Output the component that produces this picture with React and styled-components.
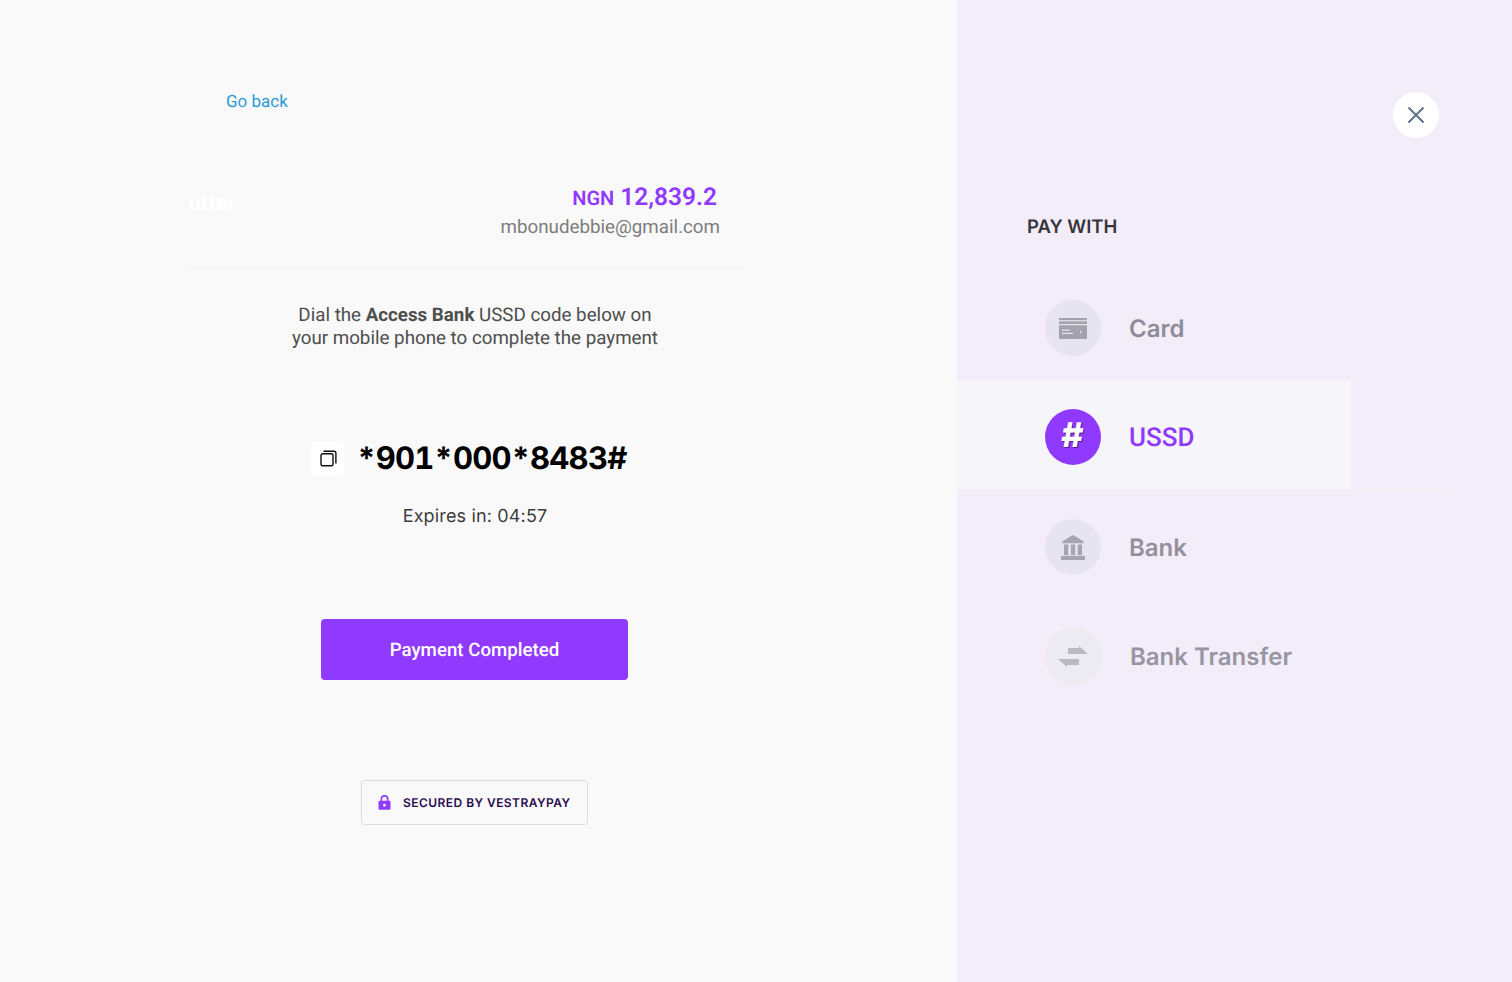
import React from "react";
import styled, { createGlobalStyle } from "styled-components";

const GlobalStyle = createGlobalStyle`
  html, body {
    margin: 0;
    padding: 0;
    height: 100%;
    background: #f9f9f9;
    text-rendering: geometricPrecision;
  }
  * { box-sizing: border-box; }
`;

const Page = styled.div`
  display: flex;
  width: 1512px;
  height: 982px;
  overflow: hidden;
  font-family: Roboto, "Liberation Sans", sans-serif;
`;

const Main = styled.main`
  width: 957px;
  background: #f9f9f9;
  padding: 91px 0 0 188px;
`;

const Column = styled.div`
  width: 556px;
  display: flex;
  flex-direction: column;
`;

const BackLink = styled.a`
  margin-left: 38px;
  font-size: 17px;
  line-height: 22px;
  color: #2a9bd8;
  cursor: pointer;
`;

const Header = styled.div`
  display: flex;
  justify-content: space-between;
  margin-top: 59px;
  height: 97px;
  border-bottom: 1px solid #eeeff1;
`;

const LogoClip = styled.div`
  width: 44px;
  height: 30px;
  margin-top: 17px;
  overflow: hidden;
  color: #fff;
  font-weight: 800;
  font-size: 22px;
  line-height: 30px;
  display: flex;
  justify-content: flex-end;
  span {
    margin-right: -4px;
  }
`;

const Payment = styled.div`
  padding: 8px 24px 0 0;
  text-align: right;
`;

const Amount = styled.div`
  color: #9039ff;
  font-weight: 600;
  font-size: 24.5px;
  line-height: 34px;
  padding-right: 3px;
  small {
    font-size: 20px;
  }
`;

const Email = styled.div`
  color: #7d7d7d;
  font-size: 18.75px;
  line-height: 24px;
`;

const Instructions = styled.p`
  margin: 35px 0 0;
  padding-left: 18px;
  text-align: center;
  color: #4e4e4e;
  font-size: 18.75px;
  line-height: 23px;
  b { font-weight: 700; }
`;

const CodeRow = styled.div`
  display: flex;
  align-items: center;
  justify-content: center;
  gap: 12px;
  margin-top: 87px;
  padding-left: 5px;
`;

const CopyButton = styled.button`
  width: 34px;
  height: 34px;
  border: 0;
  padding: 0 0 0 3px;
  border-radius: 6px;
  background: #fff;
  display: flex;
  align-items: center;
  justify-content: center;
`;

const Code = styled.div`
  font-family: Inter, sans-serif;
  font-feature-settings: "tnum" 1, "calt" 0;
  font-weight: 700;
  font-size: 31px;
  letter-spacing: -0.75px;
  line-height: 42px;
  padding-top: 1px;
  color: #000;
`;

const Expires = styled.div`
  margin-top: 25px;
  padding-left: 18px;
  text-align: center;
  font-family: Inter, sans-serif;
  font-size: 18px;
  letter-spacing: 0.15px;
  line-height: 24px;
  color: #3d3d3d;
`;

const PayButton = styled.button`
  align-self: flex-start;
  width: 307px;
  height: 61px;
  margin: 90px 0 0 133px;
  border: 0;
  border-radius: 4px;
  background: #9039ff;
  color: #fff;
  font-family: Roboto, sans-serif;
  font-weight: 500;
  font-size: 18.7px;
  text-rendering: geometricPrecision;
`;

const SecuredBadge = styled.div`
  align-self: flex-start;
  display: flex;
  align-items: center;
  gap: 12px;
  width: 227px;
  height: 45px;
  margin: 100px 0 0 173px;
  padding-left: 16px;
  border: 1px solid #dcdcdc;
  border-radius: 4px;
  font-family: Inter, sans-serif;
  font-weight: 600;
  font-size: 12px;
  letter-spacing: 0.45px;
  color: #2a0a4f;
`;

const Sidebar = styled.aside`
  position: relative;
  flex: 1;
  background: #f3ecf9;
  padding-top: 214px;
`;

const CloseButton = styled.button`
  position: absolute;
  top: 92px;
  left: 436px;
  width: 46px;
  height: 46px;
  padding: 0;
  border: 0;
  border-radius: 50%;
  background: #fff;
  display: flex;
  align-items: center;
  justify-content: center;
`;

const SideTitle = styled.h2`
  margin: 0 0 31px 70px;
  color: #35353a;
  font-family: Inter, sans-serif;
  font-size: 18.5px;
  line-height: 26px;
  font-weight: 600;
`;

const MethodList = styled.div`
  display: flex;
  flex-direction: column;
`;

const Method = styled.div`
  position: relative;
  display: flex;
  align-items: center;
  gap: 28px;
  width: 394px;
  height: 109.5px;
  padding: ${(p) => (p.$active ? 3 : 5)}px 0 0 88px;
  background: ${(p) => (p.$active ? "#f6f5f9" : "transparent")};
  opacity: ${(p) => p.$fade || 1};

  ${(p) =>
    p.$active &&
    `
    &::after {
      content: "";
      position: absolute;
      left: 0;
      bottom: 0;
      width: 493px;
      height: 1px;
      background: #f5f0f4;
    }
  `}
`;

const MethodIcon = styled.div`
  width: ${(p) => p.$size || 56}px;
  height: ${(p) => p.$size || 56}px;
  flex: none;
  border-radius: 50%;
  background: ${(p) => (p.$active ? "#9039ff" : p.$light ? "#ecebf1" : "#e6e5ef")};
  display: flex;
  align-items: center;
  justify-content: center;
`;

const HashMark = styled.span`
  color: #fff;
  font-family: Inter, sans-serif;
  font-style: italic;
  font-weight: 800;
  font-size: 34px;
  line-height: 1;
  margin: -2px 2px 0 0;
  text-shadow: 1px 1px 0 #4b1f87;
`;

const MethodLabel = styled.span`
  font-family: ${(p) => (p.$active ? "Roboto" : "Inter")}, sans-serif;
  font-weight: ${(p) => (p.$active ? 500 : 600)};
  font-size: ${(p) => (p.$active ? 26 : 24)}px;
  padding-top: ${(p) => (p.$active ? 2 : 0)}px;
  color: ${(p) => (p.$active ? "#9039ff" : "#8e8c98")};
`;

const CopyIcon = () => (
  <svg width="17" height="17" viewBox="0 0 17 17" fill="none" stroke="#111" strokeWidth="1.4">
    <rect x="1" y="3.8" width="12" height="12" rx="1.5" />
    <path d="M3.5 1.2h10.6a1.8 1.8 0 0 1 1.8 1.8v10.4" />
  </svg>
);

const LockIcon = () => (
  <svg width="13" height="15" viewBox="0 0 13 15">
    <path d="M3.3 6V4.100a3.2 3.2 0 0 1 6.4 0V6" fill="none" stroke="#9039ff" strokeWidth="1.6" />
    <rect x="0.5" y="5.800" width="12" height="9" rx="1.4" fill="#9039ff" />
    <circle cx="6.5" cy="10.2" r="1.4" fill="#f9f9f9" />
  </svg>
);

const CloseIcon = () => (
  <svg width="18" height="18" viewBox="0 0 18 18" stroke="#5f7288" strokeWidth="2">
    <path d="M1.5 1.5l15 15M16.5 1.5l-15 15" />
  </svg>
);

const CardIcon = () => (
  <svg width="28" height="21" viewBox="0 0 28 21" fill="#a3a1ad">
    <rect x="0" y="0" width="28" height="2.200" />
    <rect x="0" y="3.400" width="28" height="2.600" />
    <path d="M0 7.200h28v12.800a1 1 0 0 1-1 1H1a1 1 0 0 1-1-1z" />
    <path d="M3 11.500h8v1.300H3zM3 14.700h11v1.300H3z" fill="#e6e5ef" />
    <path d="M21 12l1.800 1.800L21 15.600z" fill="#e6e5ef" />
  </svg>
);

const BankIcon = () => (
  <svg width="24" height="25" viewBox="0 0 24 25" fill="#a3a1ad">
    <path d="M12 0L22.500 6.200v2H1.500v-2z" />
    <path d="M3 9.500h4.300v10.500H3zM9.900 9.500h4.300v10.500H9.900zM16.700 9.500H21v10.500h-4.300z" />
    <rect x="0" y="20.800" width="24" height="4.200" />
  </svg>
);

const TransferIcon = () => (
  <svg width="31" height="21" viewBox="0 0 31 21" fill="#b4b3bb">
    <path d="M10 2H21V0L30 8H10z" />
    <path d="M21 13H0L9 21V19H21z" />
  </svg>
);

export default function App() {
  return (
    <>
      <GlobalStyle />
      <Page>
        <Main>
          <Column>
            <BackLink>Go back</BackLink>
            <Header>
              <LogoClip>
                <span>utter</span>
              </LogoClip>
              <Payment>
                <Amount>
                  <small>NGN</small> 12,839.2
                </Amount>
                <Email>mbonudebbie@gmail.com</Email>
              </Payment>
            </Header>
            <Instructions>
              Dial the <b>Access Bank</b> USSD code below on
              <br />
              your mobile phone to complete the payment
            </Instructions>
            <CodeRow>
              <CopyButton aria-label="Copy code">
                <CopyIcon />
              </CopyButton>
              <Code>*901*000*8483#</Code>
            </CodeRow>
            <Expires>Expires in: 04:57</Expires>
            <PayButton>Payment Completed</PayButton>
            <SecuredBadge>
              <LockIcon />
              SECURED BY VESTRAYPAY
            </SecuredBadge>
          </Column>
        </Main>
        <Sidebar>
          <CloseButton aria-label="Close">
            <CloseIcon />
          </CloseButton>
          <SideTitle>PAY WITH</SideTitle>
          <MethodList>
            <Method>
              <MethodIcon>
                <CardIcon />
              </MethodIcon>
              <MethodLabel>Card</MethodLabel>
            </Method>
            <Method $active>
              <MethodIcon $active>
                <HashMark>#</HashMark>
              </MethodIcon>
              <MethodLabel $active>USSD</MethodLabel>
            </Method>
            <Method $fade={0.95}>
              <MethodIcon>
                <BankIcon />
              </MethodIcon>
              <MethodLabel>Bank</MethodLabel>
            </Method>
            <Method $fade={0.9}>
              <MethodIcon $size={57} $light>
                <TransferIcon />
              </MethodIcon>
              <MethodLabel>Bank Transfer</MethodLabel>
            </Method>
          </MethodList>
        </Sidebar>
      </Page>
    </>
  );
}
